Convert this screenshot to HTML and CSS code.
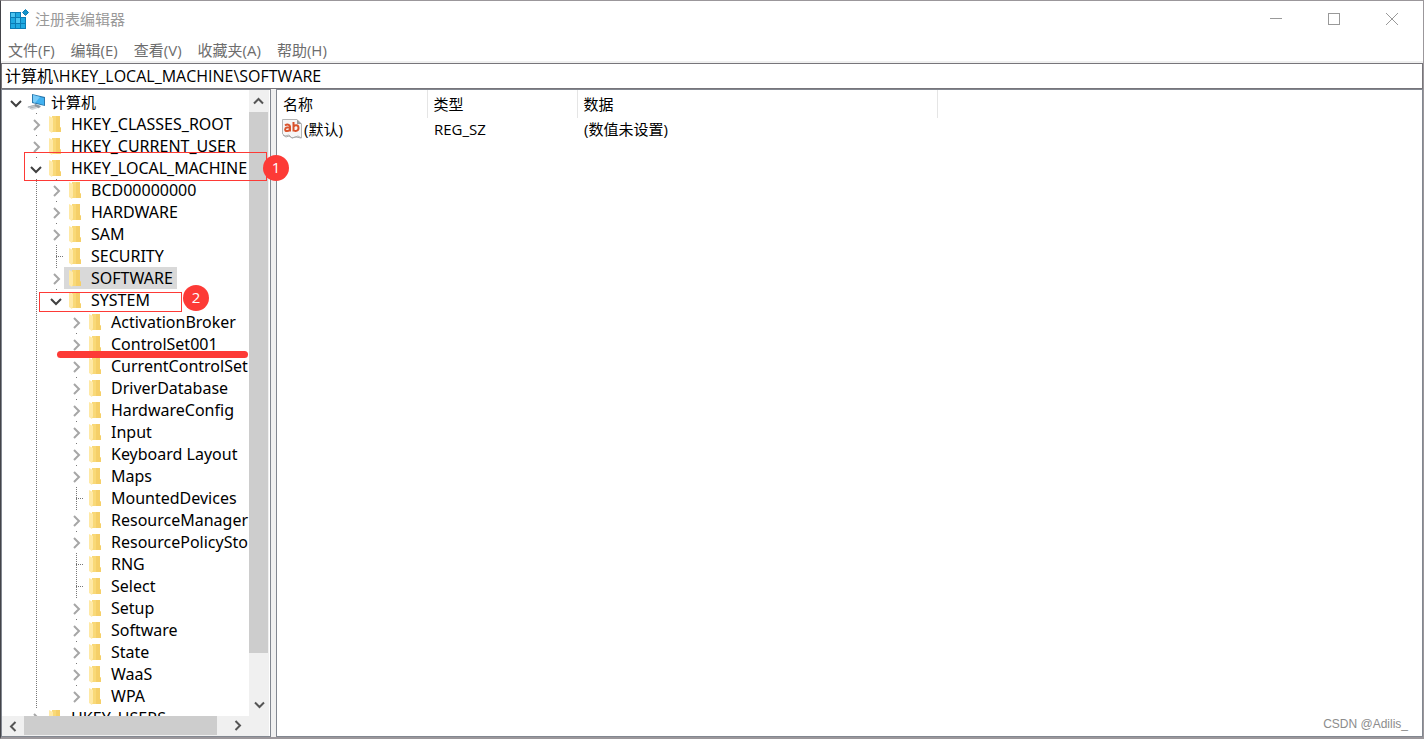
FILE: index.html
```html
<!DOCTYPE html>
<html lang="zh-CN">
<head>
<meta charset="UTF-8">
<meta name="viewport" content="width=device-width, initial-scale=1.0">
<title>注册表编辑器</title>
<link rel="stylesheet" href="styles.css">
</head>
<body>

<svg class="defs" aria-hidden="true">
    <symbol id="folder" viewBox="0 0 13 18">
        <path d="M3 1H11V12L12 13V17H3Z" fill="#f9d978"/>
        <path d="M7 1H11V12L12 13V17H7Z" fill="#f5cf68"/>
        <path d="M0 1L4 3V15L3 18L0 16Z" fill="#ffe9a6"/>
    </symbol>
    <symbol id="right" viewBox="0 0 16 22">
        <path d="M6 7L11 12L6 17" fill="none" stroke="#a6a6a6" stroke-width="2"/>
    </symbol>
    <symbol id="down" viewBox="0 0 16 22">
        <path d="M3 10L8 15L13 10" fill="none" stroke="#404040" stroke-width="2"/>
    </symbol>
    <symbol id="arrow" viewBox="0 0 20 20">
        <path d="M5 12.500L9.500 8L14 12.500" fill="none" stroke="#555" stroke-width="2"/>
    </symbol>
</svg>

<div class="window">
    <header class="titlebar">
        <svg class="app-icon" width="20" height="20" viewBox="0 0 20 20">
            <path d="M1 3H12V8H17V20H1Z" fill="#0b7cb5"/>
            <path d="M2 4H6V8H2ZM7 4H11V8H7ZM2 9H6V14H2ZM7 9H11V14H7ZM12 9H16V14H12ZM2 15H6V19H2ZM7 15H11V19H7ZM12 15H16V19H12Z" fill="#1fa9e1"/>
            <path d="M2 4H6V8H2ZM7 9H11V14H7Z" fill="#4cc4f0"/>
            <path d="M16.500 .5L19.500 3.500L16.500 6.500L13.500 3.500Z" fill="#1593c9" stroke="#0b7cb5"/>
        </svg>
        <h1>注册表编辑器</h1>
        <div class="controls">
            <button aria-label="最小化"><svg width="12" height="12"><path d="M0 5.500H12" stroke="#999"/></svg></button>
            <button aria-label="最大化"><svg width="12" height="12"><rect x=".5" y=".5" width="11" height="11" fill="none" stroke="#999"/></svg></button>
            <button aria-label="关闭"><svg width="12" height="12"><path d="M0 0L12 12M12 0L0 12" stroke="#999"/></svg></button>
        </div>
    </header>

    <nav class="menu">
        <button>文件(F)</button>
        <button>编辑(E)</button>
        <button>查看(V)</button>
        <button>收藏夹(A)</button>
        <button>帮助(H)</button>
    </nav>

    <input class="address" type="text" aria-label="地址" value="计算机\HKEY_LOCAL_MACHINE\SOFTWARE">

    <main class="panes">
        <section class="tree-pane">
            <div class="tree-view">
                <ul class="tree">
                    <li>
                        <div class="row root"><svg class="toggle"><use href="#down"/></svg><span class="label"><svg class="pc" width="20" height="18" viewBox="0 0 20 18"><path d="M0 14L9 11L14 14L5 17Z" fill="#d0d4d8"/><path d="M1 14L9 12M3 15L11 13M7 12L12 15" stroke="#a9afb5" fill="none"/><path d="M8 11L14 13L12 15L8 13Z" fill="#8b969f"/><path d="M5 1L18 4V13L5 10Z" fill="#2b78ad"/><path d="M6 2L17 5V12L6 9Z" fill="#42b2f1"/><path d="M6 2L13 4L8 10L6 9Z" fill="#79cbf8"/></svg>计算机</span></div>
                        <ul>
                            <li><div class="row"><svg class="toggle"><use href="#right"/></svg><span class="label"><svg class="folder"><use href="#folder"/></svg>HKEY_CLASSES_ROOT</span></div></li>
                            <li><div class="row"><svg class="toggle"><use href="#right"/></svg><span class="label"><svg class="folder"><use href="#folder"/></svg>HKEY_CURRENT_USER</span></div></li>
                            <li>
                                <div class="row"><svg class="toggle"><use href="#down"/></svg><span class="label"><svg class="folder"><use href="#folder"/></svg>HKEY_LOCAL_MACHINE</span></div>
                                <ul class="line">
                                    <li><div class="row"><svg class="toggle"><use href="#right"/></svg><span class="label"><svg class="folder"><use href="#folder"/></svg>BCD00000000</span></div></li>
                                    <li><div class="row"><svg class="toggle"><use href="#right"/></svg><span class="label"><svg class="folder"><use href="#folder"/></svg>HARDWARE</span></div></li>
                                    <li><div class="row"><svg class="toggle"><use href="#right"/></svg><span class="label"><svg class="folder"><use href="#folder"/></svg>SAM</span></div></li>
                                    <li><div class="row"><span class="toggle leaf"></span><span class="label"><svg class="folder"><use href="#folder"/></svg>SECURITY</span></div></li>
                                    <li><div class="row"><svg class="toggle"><use href="#right"/></svg><span class="label selected"><svg class="folder"><use href="#folder"/></svg>SOFTWARE</span></div></li>
                                    <li>
                                        <div class="row"><svg class="toggle"><use href="#down"/></svg><span class="label"><svg class="folder"><use href="#folder"/></svg>SYSTEM</span></div>
                                        <ul>
                                            <li><div class="row"><svg class="toggle"><use href="#right"/></svg><span class="label"><svg class="folder"><use href="#folder"/></svg>ActivationBroker</span></div></li>
                                            <li><div class="row"><svg class="toggle"><use href="#right"/></svg><span class="label"><svg class="folder"><use href="#folder"/></svg>ControlSet001</span></div></li>
                                            <li><div class="row"><svg class="toggle"><use href="#right"/></svg><span class="label"><svg class="folder"><use href="#folder"/></svg>CurrentControlSet</span></div></li>
                                            <li><div class="row"><svg class="toggle"><use href="#right"/></svg><span class="label"><svg class="folder"><use href="#folder"/></svg>DriverDatabase</span></div></li>
                                            <li><div class="row"><svg class="toggle"><use href="#right"/></svg><span class="label"><svg class="folder"><use href="#folder"/></svg>HardwareConfig</span></div></li>
                                            <li><div class="row"><svg class="toggle"><use href="#right"/></svg><span class="label"><svg class="folder"><use href="#folder"/></svg>Input</span></div></li>
                                            <li><div class="row"><svg class="toggle"><use href="#right"/></svg><span class="label"><svg class="folder"><use href="#folder"/></svg>Keyboard Layout</span></div></li>
                                            <li><div class="row"><svg class="toggle"><use href="#right"/></svg><span class="label"><svg class="folder"><use href="#folder"/></svg>Maps</span></div></li>
                                            <li><div class="row"><span class="toggle leaf"></span><span class="label"><svg class="folder"><use href="#folder"/></svg>MountedDevices</span></div></li>
                                            <li><div class="row"><svg class="toggle"><use href="#right"/></svg><span class="label"><svg class="folder"><use href="#folder"/></svg>ResourceManager</span></div></li>
                                            <li><div class="row"><svg class="toggle"><use href="#right"/></svg><span class="label"><svg class="folder"><use href="#folder"/></svg>ResourcePolicySto</span></div></li>
                                            <li><div class="row"><span class="toggle leaf"></span><span class="label"><svg class="folder"><use href="#folder"/></svg>RNG</span></div></li>
                                            <li><div class="row"><span class="toggle leaf"></span><span class="label"><svg class="folder"><use href="#folder"/></svg>Select</span></div></li>
                                            <li><div class="row"><svg class="toggle"><use href="#right"/></svg><span class="label"><svg class="folder"><use href="#folder"/></svg>Setup</span></div></li>
                                            <li><div class="row"><svg class="toggle"><use href="#right"/></svg><span class="label"><svg class="folder"><use href="#folder"/></svg>Software</span></div></li>
                                            <li><div class="row"><svg class="toggle"><use href="#right"/></svg><span class="label"><svg class="folder"><use href="#folder"/></svg>State</span></div></li>
                                            <li><div class="row"><svg class="toggle"><use href="#right"/></svg><span class="label"><svg class="folder"><use href="#folder"/></svg>WaaS</span></div></li>
                                            <li><div class="row"><svg class="toggle"><use href="#right"/></svg><span class="label"><svg class="folder"><use href="#folder"/></svg>WPA</span></div></li>
                                        </ul>
                                    </li>
                                </ul>
                            </li>
                            <li><div class="row"><svg class="toggle"><use href="#right"/></svg><span class="label"><svg class="folder"><use href="#folder"/></svg>HKEY_USERS</span></div></li>
                        </ul>
                    </li>
                </ul>
            </div>
            <div class="vscroll">
                <button aria-label="向上滚动"><svg width="20" height="20"><use href="#arrow"/></svg></button>
                <div class="track"><div class="thumb"></div></div>
                <button class="turn-down" aria-label="向下滚动"><svg width="20" height="20"><use href="#arrow"/></svg></button>
            </div>
            <div class="hscroll">
                <button class="turn-left" aria-label="向左滚动"><svg width="20" height="20"><use href="#arrow"/></svg></button>
                <div class="track"><div class="thumb"></div></div>
                <button class="turn-right" aria-label="向右滚动"><svg width="20" height="20"><use href="#arrow"/></svg></button>
            </div>
        </section>

        <section class="list-pane">
            <table>
                <thead>
                    <tr><th class="name">名称</th><th class="type">类型</th><th class="data">数据</th></tr>
                </thead>
                <tbody>
                    <tr>
                        <td class="value-name"><div class="value"><svg width="20" height="20" viewBox="0 0 20 20"><path d="M.5 .5H15L19.500 5V19L16 17L13 18L10 19L7 16L3 17L.5 15Z" fill="#f6f6f6" stroke="#b5b5b5"/><path d="M15 .5V5H19.500Z" fill="#999"/><path d="M1 16L4 18L7 17L10 19L14 18L19 19" fill="none" stroke="#aaa"/><g fill="none" stroke="#d9532c" stroke-width="2"><path d="M3 6.500C5 5 8 5.500 8 7.500V12.500M8 8.500H5C2.500 9 2.500 12 5 12C7 12 8 11 8 9.500"/><path d="M11.500 3V12.500M11.500 8C12.500 5.500 16.500 5.500 16.500 9C16.500 12.500 12.500 12.500 11.500 11"/></g></svg>(默认)</div></td>
                        <td>REG_SZ</td>
                        <td>(数值未设置)</td>
                    </tr>
                </tbody>
            </table>
        </section>
    </main>

    <!-- 标注 -->
    <div class="mark box-machine"></div>
    <div class="mark badge badge-machine">1</div>
    <div class="mark box-system"></div>
    <div class="mark badge badge-system">2</div>
    <div class="mark underline"></div>
    <div class="watermark">CSDN @Adilis_</div>
</div>

</body>
</html>
```

FILE: styles.css
```css
* {
    box-sizing: border-box;
}

body {
    margin: 0;
    background-color: #fff;
    color: #000;
    font-family: "Open Sans", "Noto Sans CJK SC", sans-serif;
    font-size: 15px;
}

button {
    padding: 0;
    border: none;
    background: none;
    font: inherit;
}

svg {
    display: block;
    flex: none;
}

ul {
    list-style: none;
    margin: 0;
    padding: 0;
}

.defs {
    position: absolute;
    width: 0;
    height: 0;
}

.window {
    position: relative;
    display: flex;
    flex-direction: column;
    height: 100vh;
    border: 1px solid #9b979b;
    border-left-color: #444449;
    border-bottom-width: 2px;
    overflow: hidden;
}

.titlebar {
    display: flex;
    align-items: center;
    height: 36px;
    padding: 0 2px 0 8px;
    color: #999;
}

.titlebar h1 {
    flex: 1;
    margin: 0 0 0 6px;
    padding-bottom: 2px;
    font-size: 15px;
    font-weight: normal;
}

.controls {
    display: flex;
}

.controls button {
    display: flex;
    align-items: center;
    justify-content: center;
    width: 58px;
    height: 36px;
}

.menu {
    display: flex;
    gap: 16px;
    height: 26px;
    padding: 0 7px;
    border-bottom: 2px solid #f0f0f0;
}

.menu button {
    color: #6d6d6d;
}

.address {
    height: 26px;
    padding: 0 3px 2px;
    border: 1px solid #77757a;
    background: #fff;
    color: #000;
    font: inherit;
    font-size: 16px;
}

.panes {
    display: flex;
    flex: 1;
    min-height: 0;
    background-color: #f0f0f0;
}

.tree-pane {
    display: grid;
    grid-template-columns: 1fr 20px;
    grid-template-rows: 1fr 20px;
    width: 270px;
    padding-right: 1px;
    border: 1px solid #828790;
    background-color: #fff;
}

.tree-view {
    overflow: hidden;
    min-height: 0;
    padding-top: 1px;
}

.tree {
    padding-left: 6px;
    font-family: "Noto Sans", "Noto Sans CJK SC", sans-serif;
    font-size: 16px;
}

.tree ul {
    padding-left: 20px;
}

.tree .line {
    background: repeating-linear-gradient(#777 0 1px, transparent 1px 2px) 8px 0 / 1px 100% no-repeat;
}

.row {
    display: flex;
    height: 22px;
    line-height: 22px;
    white-space: nowrap;
}

.toggle {
    flex: none;
    width: 16px;
    height: 22px;
    background: linear-gradient(#777, #777) 8px 0 / 1px 1px no-repeat;
}

.root {
    font-size: 15px;
}

.root .toggle {
    background: none;
}

.leaf {
    background:
        repeating-linear-gradient(#777 0 1px, transparent 1px 2px) 8px 0 / 1px 100% no-repeat,
        repeating-linear-gradient(90deg, #777 0 1px, transparent 1px 2px) 8px 11px / 8px 1px no-repeat;
}

.label {
    display: flex;
    align-items: center;
    padding: 0 4px 0 5px;
}

.selected {
    background-color: #d9d9d9;
}

.folder {
    width: 13px;
    height: 18px;
    margin-right: 9px;
}

.root .label {
    padding-left: 3px;
}

.pc {
    margin-right: 4px;
}

.vscroll,
.hscroll {
    display: flex;
    background-color: #f0f0f0;
}

.vscroll {
    flex-direction: column;
}

.hscroll {
    grid-column: 1 / 3;
    padding-right: 20px;
}

.vscroll button,
.hscroll button {
    display: flex;
    align-items: center;
    justify-content: center;
    width: 22px;
    height: 20px;
}

.vscroll button {
    width: 20px;
    height: 22px;
}

.turn-down svg {
    transform: rotate(180deg);
}

.turn-left svg {
    transform: rotate(-90deg);
}

.turn-right svg {
    transform: rotate(90deg);
}

.track {
    flex: 1;
}

.thumb {
    background-color: #cdcdcd;
}

.vscroll .thumb {
    width: 19px;
    height: 93%;
}

.hscroll .thumb {
    width: 95%;
    height: 19px;
}

.list-pane {
    flex: 1;
    margin-left: 5px;
    border: 1px solid #828790;
    background-color: #fff;
}

table {
    border-collapse: collapse;
    table-layout: fixed;
    width: 661px;
}

th,
td {
    padding: 0 7px;
    text-align: left;
    font-weight: normal;
    line-height: 22px;
}

th {
    height: 28px;
    padding: 0 6px;
    border-right: 1px solid #e5e5e5;
}

.name,
.type {
    width: 150px;
}

.value-name {
    padding: 0 5px;
}

.value {
    display: flex;
    align-items: center;
    gap: 2px;
}

.mark {
    position: absolute;
}

.box-machine,
.box-system {
    border: 1px solid #fd3a36;
}

.box-machine {
    left: 23px;
    top: 151px;
    width: 243px;
    height: 29px;
}

.box-system {
    left: 38px;
    top: 291px;
    width: 143px;
    height: 20px;
}

.badge {
    width: 26px;
    height: 26px;
    border-radius: 50%;
    background-color: #fd3a36;
    color: #fff;
    line-height: 24px;
    text-align: center;
}

.badge-machine {
    left: 262px;
    top: 154px;
}

.badge-system {
    left: 182px;
    top: 284px;
}

.underline {
    left: 56px;
    top: 350px;
    width: 191px;
    height: 7px;
    border-radius: 4px;
    background-color: #fd3a36;
}

.watermark {
    position: absolute;
    right: 15px;
    bottom: 6px;
    color: #8c8c8c;
    font-family: "Liberation Sans", Arial, sans-serif;
    font-size: 12px;
}
```
